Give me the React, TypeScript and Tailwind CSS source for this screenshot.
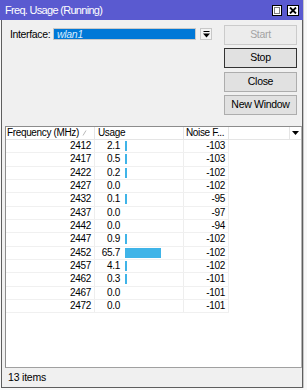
import React from "react";

const rows: [number, string, number][] = [
  [2412, "2.1", -103],
  [2417, "0.5", -103],
  [2422, "0.2", -102],
  [2427, "0.0", -102],
  [2432, "0.1", -95],
  [2437, "0.0", -97],
  [2442, "0.0", -94],
  [2447, "0.9", -102],
  [2452, "65.7", -102],
  [2457, "4.1", -102],
  [2462, "0.3", -101],
  [2467, "0.0", -101],
  [2472, "0.0", -101],
];

function barWidth(v: string): number {
  const n = parseFloat(v);
  if (n <= 0) return 0;
  return Math.max(2, Math.round((n / 100) * 55));
}

export default function App() {
  return (
    <div className="w-[307px] h-[390px] bg-[#f8f8f8] overflow-hidden font-['Liberation_Sans',Arial,sans-serif] text-black flex">
      <div className="w-[303px] h-[388px] flex flex-col">
        {/* Title bar */}
        <div className="h-[20px] bg-[#5a5ad0] flex items-center pl-[5px] pr-[4px]">
          <span className="text-white text-[11px] tracking-[-0.7px] leading-none flex-1">
            Freq. Usage (Running)
          </span>
          <div className="w-[10px] h-[11px] bg-white border border-black flex items-center justify-center mr-[5px]">
            <div className="w-[6px] h-[7px] border border-[#808080]" />
          </div>
          <div className="w-[12px] h-[11px] bg-white border border-black flex items-center justify-center">
            <svg width="8" height="7" viewBox="0 0 8 7">
              <path d="M1 0.5 L7 6.5 M7 0.5 L1 6.5" stroke="black" strokeWidth="1.8" />
            </svg>
          </div>
        </div>
        {/* Body */}
        <div className="flex-1 flex flex-col bg-[#f0f0f0] ml-[1px] border-l border-r border-b border-[#5e5e5e]">
          {/* Top section */}
          <div className="h-[106px] flex">
            <div className="flex-1 pt-[8px] pl-[8px]">
              <div className="flex items-center h-[12px]">
                <span className="text-[10.5px] tracking-[-0.35px] leading-none w-[43px]">Interface:</span>
                <div className="w-[143px] h-[12px] bg-[#0078d7] border border-[#c8c8c8] flex items-center pl-[3px]">
                  <span className="text-[10.5px] italic text-[#d8ecff] leading-none tracking-[-0.3px]">wlan1</span>
                </div>
                <div className="ml-[4px] w-[12px] h-[12px] bg-[#f4f4f4] border border-[#c8c8c8] flex items-center justify-center">
                  <svg width="7" height="7" viewBox="0 0 7 7">
                    <rect x="0.5" y="0" width="6" height="1" fill="black" />
                    <path d="M0 2.5 L7 2.5 L3.5 6.5 Z" fill="black" />
                  </svg>
                </div>
              </div>
            </div>
            <div className="w-[73px] mr-[5px] flex flex-col pt-[5px]">
              <div className="h-[20px] bg-[#ececec] border border-[#cbcbcb] flex items-center justify-center text-[10.5px] tracking-[-0.3px] text-[#a3a3a3]">
                Start
              </div>
              <div className="mt-[3px] h-[20px] bg-[#e1e1e1] border border-[#333333] flex items-center justify-center text-[10.5px] tracking-[-0.3px]">
                Stop
              </div>
              <div className="mt-[4px] h-[20px] bg-[#e1e1e1] border border-[#adadad] flex items-center justify-center text-[10.5px] tracking-[-0.3px]">
                Close
              </div>
              <div className="mt-[3px] h-[20px] bg-[#e1e1e1] border border-[#adadad] flex items-center justify-center text-[10.5px] tracking-[-0.3px]">
                New Window
              </div>
            </div>
          </div>
          {/* Table */}
          <div className="h-[242px] ml-[3px] bg-white border border-[#8c8c8c] border-r-[#b4b4b4] border-b-[#a0a0a0] flex flex-col">
            <div className="h-[13px] flex border-b border-[#e5e5e5] text-[10px] tracking-[-0.35px] leading-none">
              <div className="w-[89px] border-r border-[#e5e5e5] flex items-center pl-[1px]">
                <span>Frequency (MHz)</span>
                <svg width="5" height="6" viewBox="0 0 5 6" className="ml-[3px]">
                  <path d="M1 5.5 L4 0.5" stroke="#b8b8b8" strokeWidth="1" />
                </svg>
              </div>
              <div className="w-[89px] border-r border-[#e5e5e5] flex items-center pl-[3px]">Usage</div>
              <div className="w-[45px] border-r border-[#e5e5e5] flex items-center pl-[2px]">Noise F...</div>
              <div className="w-[61px] border-r border-[#e5e5e5]" />
              <div className="flex-1 flex items-center justify-center">
                <svg width="7" height="4" viewBox="0 0 7 4">
                  <path d="M0 0 L7 0 L3.5 4 Z" fill="black" />
                </svg>
              </div>
            </div>
            {rows.map(([f, u, n]) => {
              const w = barWidth(u);
              return (
                <div key={f} className="h-[13.33px] w-[223px] flex border-b border-[#f0f0f0] text-[10px] tracking-[-0.3px] leading-none">
                  <div className="w-[89px] border-r border-[#eeeeee] flex items-center justify-end pr-[3px]">{f}</div>
                  <div className="w-[89px] border-r border-[#eeeeee] flex items-center">
                    <span className="w-[25px] text-right">{u}</span>
                    {w > 0 && <div className="ml-[5px] h-[10px] bg-[#3fb4e8]" style={{ width: w }} />}
                  </div>
                  <div className="w-[45px] border-r border-[#eeeeee] flex items-center justify-end pr-[3px]">{n}</div>
                </div>
              );
            })}
          </div>
          {/* Status bar */}
          <div className="flex-1 flex items-center pl-[6px] text-[10.5px] tracking-[-0.2px] leading-none">
            13 items
          </div>
        </div>
      </div>
      <div className="w-[1px] h-[388px] bg-[#c8c8c8]" />
    </div>
  );
}
